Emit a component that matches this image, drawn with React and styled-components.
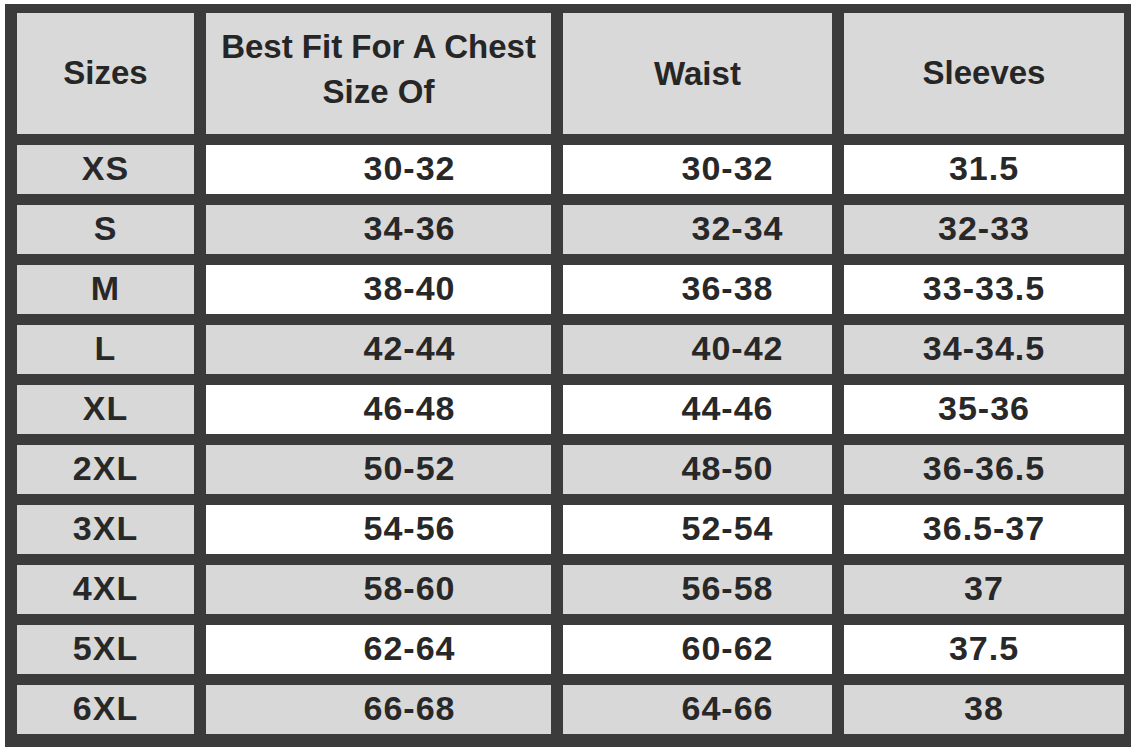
import React from 'react';
import styled, { createGlobalStyle } from 'styled-components';

const GlobalStyle = createGlobalStyle`
  html, body {
    margin: 0;
    padding: 0;
    background: #ffffff;
  }
  body {
    font-family: "Liberation Sans", Arial, sans-serif;
  }
`;

const Page = styled.div`
  width: 1140px;
  height: 752px;
  padding: 4px 0 0 5px;
  box-sizing: border-box;
  background: #ffffff;
`;

const Table = styled.div`
  display: grid;
  width: 1126px;
  box-sizing: border-box;
  grid-template-columns: 177px 345px 269px 280px;
  grid-template-rows: 121px repeat(10, 49px);
  column-gap: 12px;
  row-gap: 11px;
  padding: 9px 7px 13px 12px;
  background: #3b3b3b;
`;

const HeadCell = styled.div`
  display: flex;
  align-items: center;
  justify-content: center;
  text-align: center;
  background: #d9d9d9;
  color: #262626;
  font-weight: 700;
  font-size: 33px;
  line-height: 45px;
  padding-bottom: ${p => p.$lift || 0}px;
`;

const Cell = styled.div`
  display: flex;
  align-items: center;
  justify-content: center;
  background: ${p => (p.$white ? '#ffffff' : '#d8d8d8')};
  color: #282828;
  font-weight: 700;
  font-size: 34px;
  letter-spacing: 1px;
  padding-left: ${p => p.$shift || 0}px;
  padding-bottom: 2px;
`;

const rows = [
  ['XS', '30-32', '30-32', '31.5', 0, 0],
  ['S', '34-36', '32-34', '32-33', 0, 20],
  ['M', '38-40', '36-38', '33-33.5', 0, 0],
  ['L', '42-44', '40-42', '34-34.5', 0, 20],
  ['XL', '46-48', '44-46', '35-36', 0, 0],
  ['2XL', '50-52', '48-50', '36-36.5', 0, 0],
  ['3XL', '54-56', '52-54', '36.5-37', 0, 0],
  ['4XL', '58-60', '56-58', '37', 0, 0],
  ['5XL', '62-64', '60-62', '37.5', 0, 0],
  ['6XL', '66-68', '64-66', '38', 0, 0],
];

export default function App() {
  return (
    <Page>
      <GlobalStyle />
      <Table>
        <HeadCell $lift={2}>Sizes</HeadCell>
        <HeadCell $lift={10}>Best Fit For A Chest<br />Size Of</HeadCell>
        <HeadCell $lift={0}>Waist</HeadCell>
        <HeadCell $lift={2}>Sleeves</HeadCell>
        {rows.map(([size, chest, waist, sleeve, , waistShift], i) => {
          const white = i % 2 === 0;
          return (
            <React.Fragment key={size}>
              <Cell>{size}</Cell>
              <Cell $white={white} $shift={62}>{chest}</Cell>
              <Cell $white={white} $shift={60 + waistShift}>{waist}</Cell>
              <Cell $white={white}>{sleeve}</Cell>
            </React.Fragment>
          );
        })}
      </Table>
    </Page>
  );
}
